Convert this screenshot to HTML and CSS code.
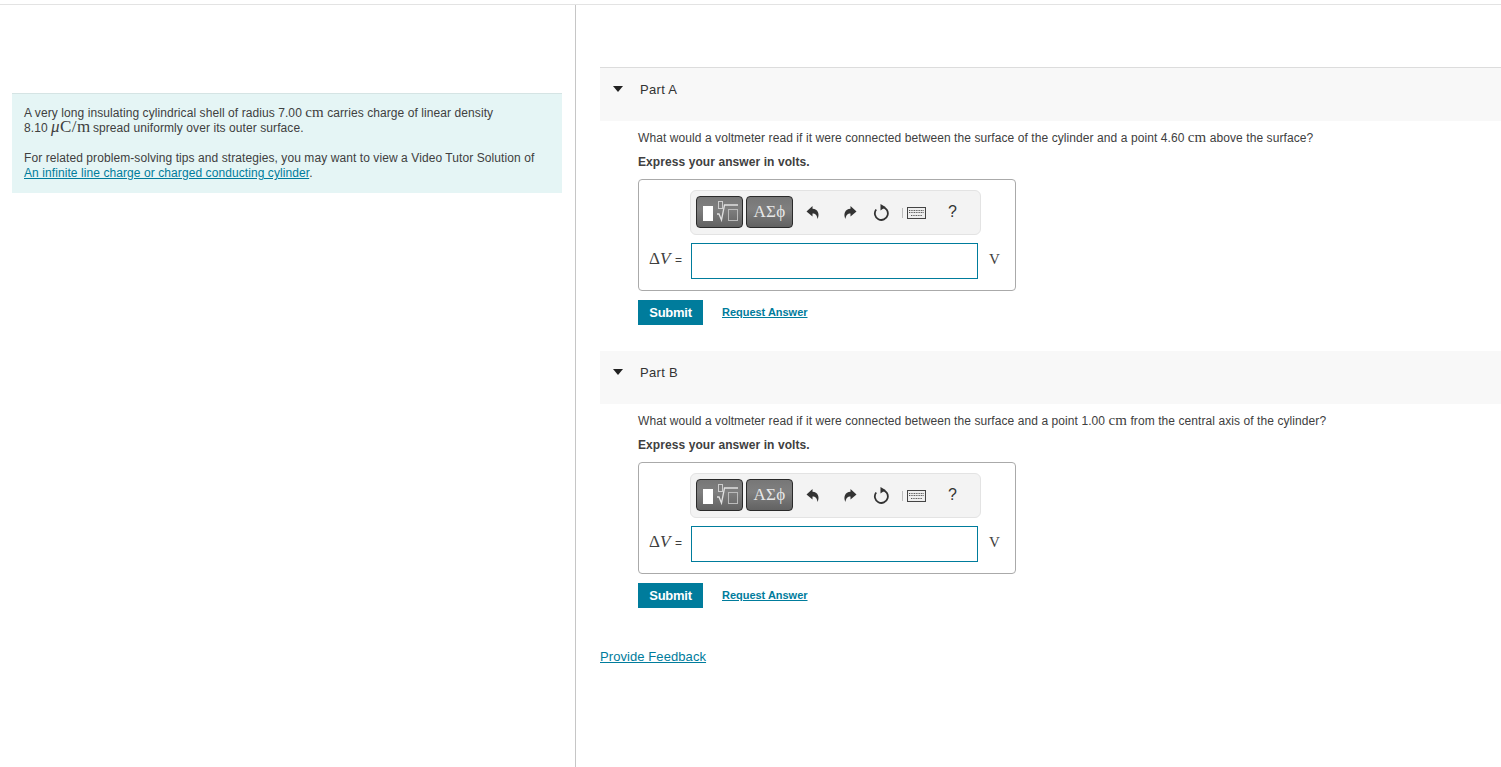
FILE: index.html
```html
<!DOCTYPE html>
<html lang="en">
<head>
<meta charset="utf-8">
<title>Part A and Part B</title>
<link rel="stylesheet" href="styles.css">
</head>
<body>
<main class="page">
  <aside class="left">
    <section class="intro">
      <p>A very long insulating cylindrical shell of radius 7.00 <span class="m">cm</span> carries charge of linear density<br>8.10 <span class="m big"><i>μ</i>C/m</span> spread uniformly over its outer surface.</p>
      <p class="tip">For related problem-solving tips and strategies, you may want to view a Video Tutor Solution of<br><a href="#">An infinite line charge or charged conducting cylinder</a>.</p>
    </section>
  </aside>
  <section class="right">
    <article class="part first">
      <header class="part-head"><svg class="caret" viewBox="0 0 10 6" width="10" height="6"><path d="M0 0h10L5 6z"/></svg><span>Part A</span></header>
      <div class="part-body">
        <p class="q">What would a voltmeter read if it were connected between the surface of the cylinder and a point 4.60 <span class="m">cm</span> above the surface?</p>
        <p class="exp">Express your answer in volts.</p>
        <div class="answer">
          <div class="toolbar">
            <button class="tb-btn tpl" type="button"><svg viewBox="0 0 45 30" width="45" height="30"><rect x="6" y="9" width="10" height="15" fill="#fff"/><rect x="21.500" y="4.500" width="4" height="7" fill="none" stroke="#ccc"/><path d="M20 17l2 0 2.500 6 3-15h13.500" fill="none" stroke="#e0e0e0" stroke-width="1.300"/><rect x="31.500" y="12.500" width="9" height="11" fill="none" stroke="#bbb"/></svg></button>
            <button class="tb-btn sym" type="button">ΑΣϕ</button>
            <svg class="ico undo" viewBox="0 0 15 15" width="15" height="15"><path d="M6.500 1L.5 6.500l6 5V8.500c3 0 4.500 1.500 5 5.500 2.500-5 .5-10-5-10.300z" fill="#333"/></svg>
            <svg class="ico redo" viewBox="0 0 15 15" width="15" height="15"><path d="M8.500 1l6 5.500-6 5V8.500c-3 0-4.500 1.500-5 5.500C1 9 3 4 8.500 3.700z" fill="#333"/></svg>
            <svg class="ico reset" viewBox="0 0 17 17" width="17" height="17"><path d="M9 3a6.500 6.500 0 1 1-5.800 2.500" fill="none" stroke="#333" stroke-width="1.800"/><path d="M7.500 0v6.500L12.500 3z" fill="#333"/></svg>
            <span class="sep"></span>
            <svg class="ico kbd" viewBox="0 0 19 12" width="19" height="12"><rect x=".5" y=".5" width="18" height="11" fill="#eee" stroke="#444"/><path d="M2 3.500h15M2 5.500h15M4 8.500h11" stroke="#555" stroke-width="1.200" stroke-dasharray="1 .7"/></svg>
            <span class="help">?</span>
          </div>
          <div class="row">
            <label class="lbl"><span class="m">Δ<i>V</i></span> =</label>
            <input class="inp" type="text" aria-label="Delta V">
            <span class="unit">V</span>
          </div>
        </div>
        <div class="actions"><button class="submit" type="button">Submit</button><a class="req" href="#">Request Answer</a></div>
      </div>
    </article>
    <article class="part second">
      <header class="part-head"><svg class="caret" viewBox="0 0 10 6" width="10" height="6"><path d="M0 0h10L5 6z"/></svg><span>Part B</span></header>
      <div class="part-body">
        <p class="q">What would a voltmeter read if it were connected between the surface and a point 1.00 <span class="m">cm</span> from the central axis of the cylinder?</p>
        <p class="exp">Express your answer in volts.</p>
        <div class="answer">
          <div class="toolbar">
            <button class="tb-btn tpl" type="button"><svg viewBox="0 0 45 30" width="45" height="30"><rect x="6" y="9" width="10" height="15" fill="#fff"/><rect x="21.500" y="4.500" width="4" height="7" fill="none" stroke="#ccc"/><path d="M20 17l2 0 2.500 6 3-15h13.500" fill="none" stroke="#e0e0e0" stroke-width="1.300"/><rect x="31.500" y="12.500" width="9" height="11" fill="none" stroke="#bbb"/></svg></button>
            <button class="tb-btn sym" type="button">ΑΣϕ</button>
            <svg class="ico undo" viewBox="0 0 15 15" width="15" height="15"><path d="M6.500 1L.5 6.500l6 5V8.500c3 0 4.500 1.500 5 5.500 2.500-5 .5-10-5-10.300z" fill="#333"/></svg>
            <svg class="ico redo" viewBox="0 0 15 15" width="15" height="15"><path d="M8.500 1l6 5.500-6 5V8.500c-3 0-4.500 1.500-5 5.500C1 9 3 4 8.500 3.700z" fill="#333"/></svg>
            <svg class="ico reset" viewBox="0 0 17 17" width="17" height="17"><path d="M9 3a6.500 6.500 0 1 1-5.800 2.500" fill="none" stroke="#333" stroke-width="1.800"/><path d="M7.500 0v6.500L12.500 3z" fill="#333"/></svg>
            <span class="sep"></span>
            <svg class="ico kbd" viewBox="0 0 19 12" width="19" height="12"><rect x=".5" y=".5" width="18" height="11" fill="#eee" stroke="#444"/><path d="M2 3.500h15M2 5.500h15M4 8.500h11" stroke="#555" stroke-width="1.200" stroke-dasharray="1 .7"/></svg>
            <span class="help">?</span>
          </div>
          <div class="row">
            <label class="lbl"><span class="m">Δ<i>V</i></span> =</label>
            <input class="inp" type="text" aria-label="Delta V">
            <span class="unit">V</span>
          </div>
        </div>
        <div class="actions"><button class="submit" type="button">Submit</button><a class="req" href="#">Request Answer</a></div>
      </div>
    </article>
    <a class="feedback" href="#">Provide Feedback</a>
  </section>
</main>
</body>
</html>
```
FILE: styles.css
```css
* { box-sizing: border-box; }
html, body { margin: 0; height: 100%; overflow: hidden; background: #fff; }
body { font-family: "Liberation Sans", Arial, sans-serif; font-size: 12px; letter-spacing: .08px; color: #404040; padding-top: 4px; }
p { margin: 0; }
a { color: #007c9c; }
.m { font-family: "Liberation Serif", serif; font-size: 15px; line-height: 0; }
.big { font-size: 17px; letter-spacing: .4px; margin-right: -1px; }
.page { display: flex; height: 763px; border-top: 1px solid #e3e3e3; }
.left { width: 576px; flex: none; border-right: 1px solid #c6c6c6; padding: 88px 13px 0 12px; }
.intro { height: 100px; background: #e5f5f5; border-top: 1px solid #d5e4e4; padding: 12px 12px 0; line-height: 15px; }
.tip { margin-top: 15px; }
.right { flex: 1; padding: 62px 0 0 24px; min-width: 0; }
.part-head { height: 53px; background: #f8f8f8; display: flex; align-items: flex-start; padding: 14px 0 0 13px; font-size: 13px; letter-spacing: .3px; color: #333; line-height: 15px; }
.first .part-head { height: 54px; border-top: 1px solid #dcdcdc; }
.caret { margin: 4px 17px 0 0; fill: #222; }
.part-body { padding: 0 0 0 38px; }
.q { padding-top: 10px; line-height: 15px; }
.exp { font-weight: 700; margin-top: 9px; line-height: 15px; }
.answer { width: 378px; height: 112px; margin-top: 9px; border: 1px solid #aaa; border-radius: 4px; padding: 10px 0 0; }
.toolbar { margin-left: 51px; width: 291px; height: 45px; background: #f3f3f3; border: 1px solid #e3e3e3; border-radius: 6px; display: flex; align-items: center; padding: 0 0 1px 5px; }
.tb-btn { height: 32px; width: 47px; padding: 0; border: 1px solid #2a2a2a; border-radius: 4px; background: linear-gradient(#777, #7f7f7f 40%, #626262); color: #e8e8e8; display: flex; align-items: center; justify-content: center; }
.sym { margin-left: 3px; font-family: "Liberation Serif", serif; font-size: 17px; letter-spacing: .3px; }
.ico { flex: none; }
.undo { margin-left: 13px; }
.redo { margin-left: 21px; }
.reset { margin-left: 16px; }
.sep { width: 1px; height: 10px; background: #bbb; margin: 2px 0 0 12px; }
.kbd { margin: 2px 0 0 4px; }
.help { font-size: 16px; color: #333; margin-left: 22px; }
.row { display: flex; align-items: center; height: 36px; margin-top: 8px; }
.lbl { width: 52px; padding: 0 0 2px 10px; white-space: nowrap; font-size: 12px; word-spacing: 1px; line-height: 20px; }
.lbl .m { font-size: 17px; }
.inp { width: 287px; height: 36px; border: 1px solid #007c9c; background: #fff; padding: 0; }
.unit { font-family: "Liberation Serif", serif; font-size: 15px; margin-left: 11px; padding-bottom: 4px; }
.actions { display: flex; align-items: center; margin-top: 9px; }
.submit { width: 65px; height: 25px; background: #007c9c; color: #fff; border: 0; padding: 0 0 1px; font: 700 13px "Liberation Sans", Arial, sans-serif; letter-spacing: -.25px; }
.req { margin-left: 19px; padding-bottom: 2px; font-size: 11px; font-weight: 700; letter-spacing: -.02px; }
.second { margin-top: 26px; }
.feedback { display: inline-block; margin-top: 41px; font-size: 13px; line-height: 15px; }
```
